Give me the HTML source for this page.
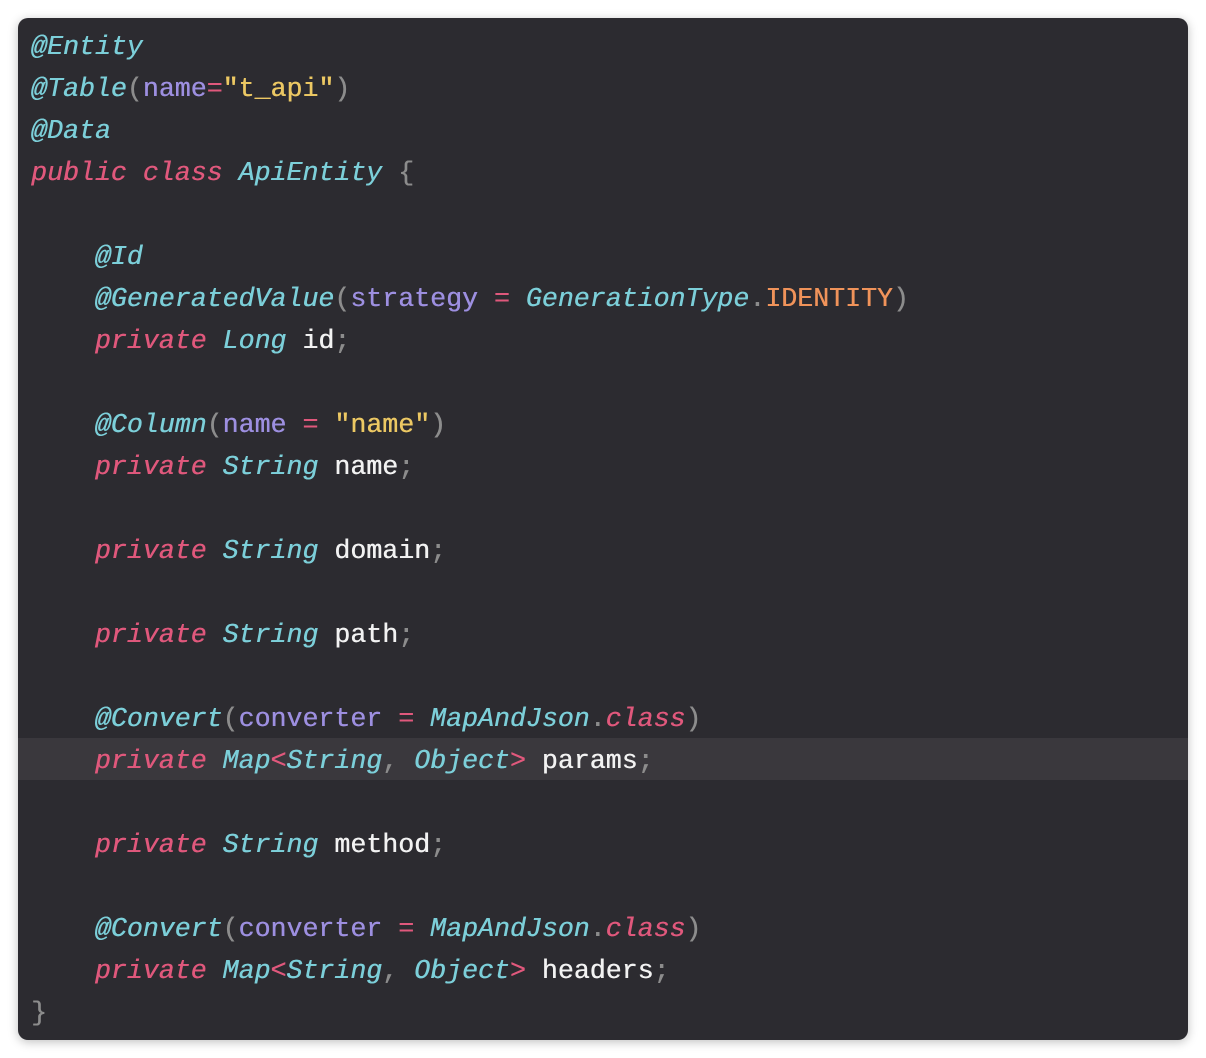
<!DOCTYPE html>
<html><head><meta charset="utf-8"><style>
body{margin:0;background:#fff;width:1206px;height:1058px;overflow:hidden}
.box{position:absolute;left:18px;top:18px;width:1170px;height:1022px;background:#2c2b30;border-radius:10px;box-shadow:0 2px 10px rgba(0,0,0,.25);overflow:hidden}
.hl{position:absolute;left:0;top:720px;width:1170px;height:42px;background:#3a383d}
pre{position:absolute;left:13px;top:8px;margin:0;font-family:"Liberation Mono",monospace;font-size:26.6px;line-height:42px;color:#f2f2f2;text-shadow:0.4px 0 0 currentColor}
.c{color:#7ccfd9;font-style:italic}.k{color:#e0587c;font-style:italic}.p{color:#9d8fe0}.s{color:#ecc863}.o{color:#f0935a}.g{color:#8c8c8c}.e{color:#e0587c}
</style></head><body><div class="box"><div class="hl"></div><pre><span class="c">@Entity</span>
<span class="c">@Table</span><span class="g">(</span><span class="p">name</span><span class="e">=</span><span class="s">"t_api"</span><span class="g">)</span>
<span class="c">@Data</span>
<span class="k">public class</span> <span class="c">ApiEntity</span> <span class="g">{</span>

    <span class="c">@Id</span>
    <span class="c">@GeneratedValue</span><span class="g">(</span><span class="p">strategy</span> <span class="e">=</span> <span class="c">GenerationType</span><span class="g">.</span><span class="o">IDENTITY</span><span class="g">)</span>
    <span class="k">private</span> <span class="c">Long</span> id<span class="g">;</span>

    <span class="c">@Column</span><span class="g">(</span><span class="p">name</span> <span class="e">=</span> <span class="s">"name"</span><span class="g">)</span>
    <span class="k">private</span> <span class="c">String</span> name<span class="g">;</span>

    <span class="k">private</span> <span class="c">String</span> domain<span class="g">;</span>

    <span class="k">private</span> <span class="c">String</span> path<span class="g">;</span>

    <span class="c">@Convert</span><span class="g">(</span><span class="p">converter</span> <span class="e">=</span> <span class="c">MapAndJson</span><span class="g">.</span><span class="k">class</span><span class="g">)</span>
    <span class="k">private</span> <span class="c">Map</span><span class="e">&lt;</span><span class="c">String</span><span class="g">,</span> <span class="c">Object</span><span class="e">&gt;</span> params<span class="g">;</span>

    <span class="k">private</span> <span class="c">String</span> method<span class="g">;</span>

    <span class="c">@Convert</span><span class="g">(</span><span class="p">converter</span> <span class="e">=</span> <span class="c">MapAndJson</span><span class="g">.</span><span class="k">class</span><span class="g">)</span>
    <span class="k">private</span> <span class="c">Map</span><span class="e">&lt;</span><span class="c">String</span><span class="g">,</span> <span class="c">Object</span><span class="e">&gt;</span> headers<span class="g">;</span>
<span class="g">}</span></pre></div></body></html>
